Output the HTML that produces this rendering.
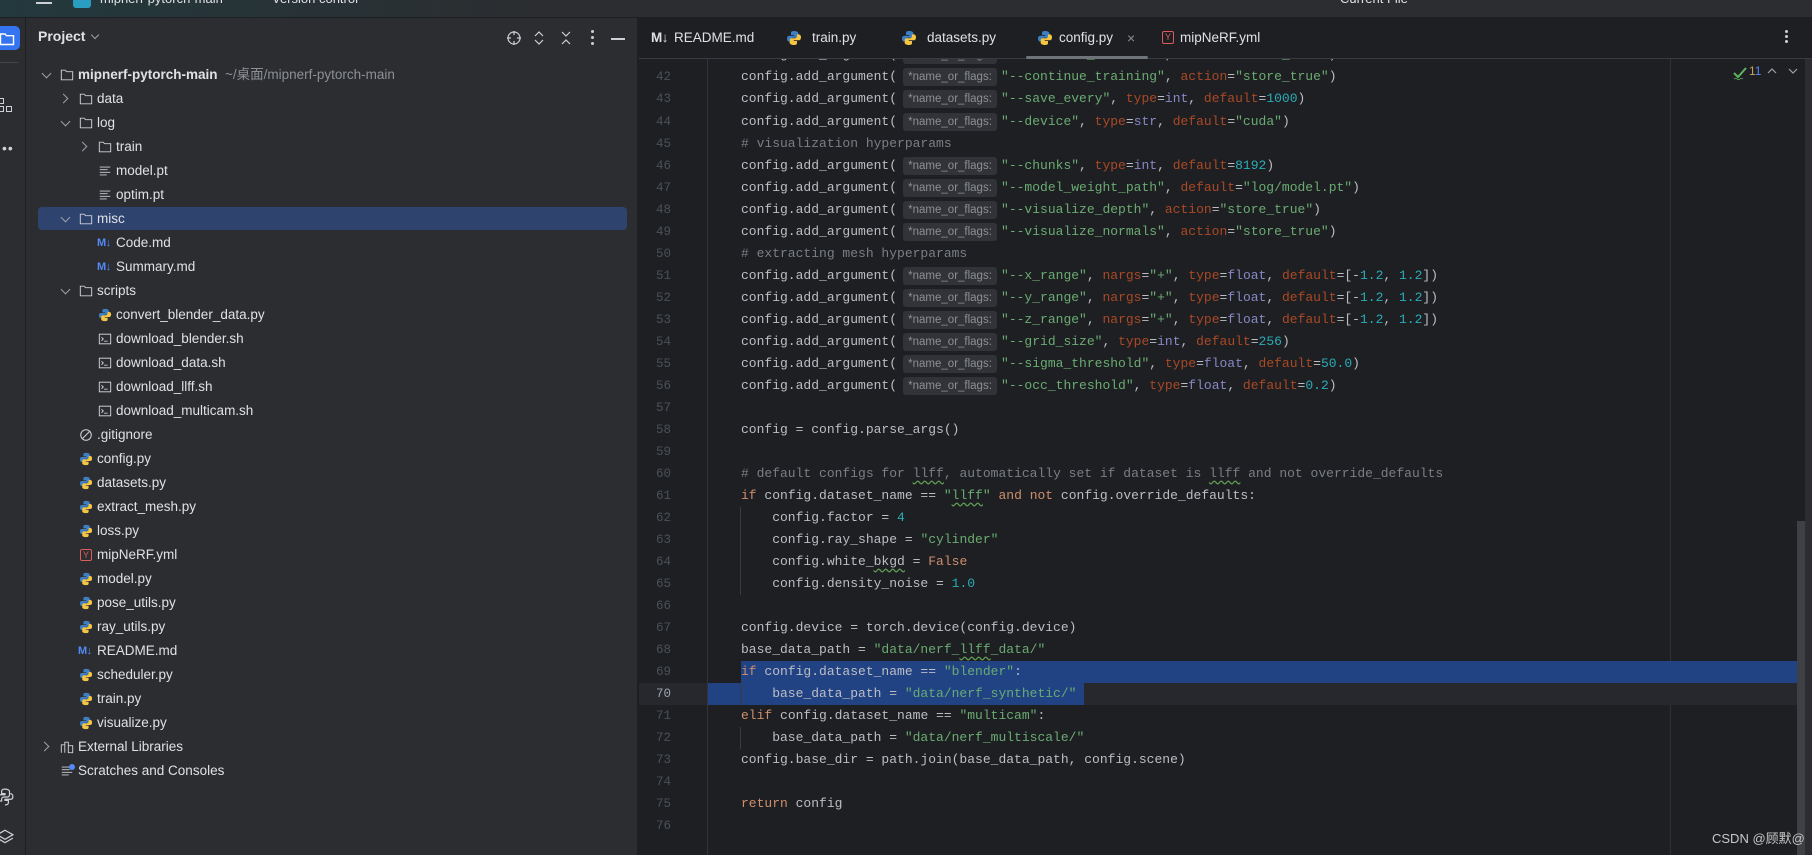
<!DOCTYPE html>
<html><head><meta charset="utf-8">
<style>
*{margin:0;padding:0;box-sizing:border-box}
body{width:1812px;height:855px;overflow:hidden;background:#1e1f22;position:relative;font-family:"Liberation Sans","Noto Sans CJK SC",sans-serif;color:#dfe1e5}
.abs{position:absolute}
#title{left:0;top:0;width:1812px;height:18px;background:linear-gradient(90deg,#23393e 0%,#2b2d30 30%,#2b2d30 100%);border-bottom:1px solid #1e1f22;overflow:hidden}
#tb{left:0;top:18px;width:26px;height:837px;background:#2b2d30;border-right:1px solid #1e1f22}
#proj{left:26px;top:18px;width:612px;height:837px;background:#2b2d30;border-right:1px solid #1e1f22}
.row{position:absolute;height:24px;line-height:24px;font-size:13.5px;white-space:nowrap}
.chev{position:absolute;width:7px;height:7px;border-right:1.3px solid #9da0a8;border-bottom:1.3px solid #9da0a8}
.chev.o{transform:rotate(45deg)}
.chev.c{transform:rotate(-45deg)}
.md{font-weight:bold;color:#548af7;font-size:11px;letter-spacing:-0.5px}
#tabs{left:639px;top:18px;width:1173px;height:41px;background:#1e1f22;border-bottom:1px solid #393b40;z-index:5}
.tab{position:absolute;top:0;height:40px;line-height:40px;font-size:13.5px;color:#dfe1e5;white-space:nowrap}
.l{position:absolute;left:0;width:1812px;height:22px;line-height:22px;font-family:"Liberation Mono",monospace;font-size:13px}
.ln{position:absolute;left:632px;width:39px;text-align:right;color:#4b5059;font-size:12.5px}
.cd{position:absolute;left:741px;white-space:pre;color:#bcbec4}
.k{color:#cf8e6d}.s{color:#6aab73}.n{color:#2aacb8}.p{color:#aa4926}.b{color:#8888c6}.c{color:#7a7e85}
.w{text-decoration:underline wavy #5f9a55;text-underline-offset:3px}
.h{display:inline-block;vertical-align:top;margin:2px 4px 0 6px;width:94px;height:18px;line-height:18px;background:#313338;border-radius:3px;color:#8c8f94;font-family:"Liberation Sans",sans-serif;font-size:11.5px;text-align:center}
</style></head><body>
<svg width="0" height="0" style="position:absolute">
<defs>
<symbol id="py" viewBox="0 0 16 16"><path d="M8 1C5 1 5 2.3 5 3v2h3.2v.7H3.3C1.9 5.7 1 6.8 1 8.6s.9 3 2.3 3H5V9.9c0-1.2 1-2.2 2.2-2.2h3.3c1 0 1.8-.8 1.8-1.8V3c0-1.1-1.7-2-4.3-2z" fill="#3d7fc4"/><path d="M8 15c3 0 3-1.3 3-2v-2H7.8v-.7h4.9c1.4 0 2.3-1.1 2.3-2.9s-.9-3-2.3-3H11v1.7c0 1.2-1 2.2-2.2 2.2H5.5c-1 0-1.8.8-1.8 1.8V13c0 1.1 1.7 2 4.3 2z" fill="#f4c542"/></symbol>
<symbol id="fd" viewBox="0 0 16 16"><path d="M1.5 2.5h4.5l1.5 1.7h7v9.3h-13z" fill="none" stroke="#ced0d6" stroke-width="1.1"/></symbol>
<symbol id="tx" viewBox="0 0 16 16"><path d="M2 3.5h12M2 6.5h9M2 9.5h12M2 12.5h8" stroke="#ced0d6" stroke-width="1.1"/></symbol>
<symbol id="sh" viewBox="0 0 16 16"><rect x="1.5" y="2.5" width="13" height="11" fill="none" stroke="#ced0d6" stroke-width="1.1"/><path d="M4 6l2 2-2 2M7 10.5h4" fill="none" stroke="#ced0d6" stroke-width="1.1"/></symbol>
</defs></svg>

<div id="title" class="abs">
<div class="abs" style="left:36px;top:2px;width:16px;height:1.5px;background:#ced0d6"></div>
<div class="abs" style="left:73px;top:-6px;width:18px;height:14px;background:#2a9ec0;border-radius:3px"></div>
<div class="abs" style="left:100px;top:-9px;font-size:13px;color:#dfe1e5">mipnerf-pytorch-main</div>
<div class="abs" style="left:272px;top:-9px;font-size:13px;color:#dfe1e5">Version control</div>
<div class="abs" style="left:1340px;top:-9px;font-size:13px;color:#dfe1e5">Current File</div>
</div>

<div id="tb" class="abs">
<div class="abs" style="left:-4px;top:8px;width:24px;height:24px;background:#3574f0;border-radius:5px"></div>
<svg class="abs" style="left:-2px;top:13px" width="18" height="16" viewBox="0 0 16 16"><path d="M1.5 3h4.5l1.5 1.7h7v8.8h-13z" fill="none" stroke="#fff" stroke-width="1.4"/></svg>
<div class="abs" style="left:0;top:44px;width:18px;height:1px;background:#43454a"></div>
<div class="abs" style="left:-2px;top:80px;width:6px;height:6px;border:1.2px solid #ced0d6"></div>
<div class="abs" style="left:-2px;top:88px;width:6px;height:6px;border:1.2px solid #ced0d6"></div>
<div class="abs" style="left:6px;top:88px;width:6px;height:6px;border:1.2px solid #ced0d6"></div>
<div class="abs" style="left:2px;top:122px;font-size:14px;color:#ced0d6;letter-spacing:1px">••</div>
<svg class="abs" style="left:-4px;top:769px" width="18" height="20" viewBox="0 0 16 16"><path d="M8 1C5 1 5 2.3 5 3v2h3v1H3C1.9 6 1 7 1 8.6s.9 3 2.3 3H5V10c0-1.2 1-2 2-2h3c1 0 2-.8 2-2V3c0-1.1-1.7-2-4-2zM8 15c3 0 3-1.3 3-2v-2H8v-1h5c1.4 0 2-1 2-2.5S14 5 12.7 5" fill="none" stroke="#ced0d6" stroke-width="1.1"/></svg>
<svg class="abs" style="left:-4px;top:810px" width="18" height="18" viewBox="0 0 16 16"><path d="M8 2l7 4-7 4-7-4zM1 9l7 4 7-4" fill="none" stroke="#ced0d6" stroke-width="1.1"/></svg>
</div>

<div id="proj" class="abs"></div>
<div class="abs" style="left:38px;top:28px;font-size:14px;font-weight:bold;color:#dfe1e5">Project</div>
<div class="abs" style="left:92px;top:32px;width:6px;height:6px;border-right:1.2px solid #9da0a8;border-bottom:1.2px solid #9da0a8;transform:rotate(45deg)"></div>
<svg class="abs" style="left:506px;top:30px" width="16" height="16" viewBox="0 0 16 16"><circle cx="8" cy="8" r="6" fill="none" stroke="#ced0d6" stroke-width="1.2"/><path d="M8 1v4M8 11v4M1 8h4M11 8h4" stroke="#ced0d6" stroke-width="1.2"/></svg>
<svg class="abs" style="left:532px;top:30px" width="14" height="16" viewBox="0 0 14 16"><path d="M3 6l4-4 4 4M3 10l4 4 4-4" fill="none" stroke="#ced0d6" stroke-width="1.2"/></svg>
<svg class="abs" style="left:559px;top:30px" width="14" height="16" viewBox="0 0 14 16"><path d="M3 2l4 4 4-4M3 14l4-4 4 4" fill="none" stroke="#ced0d6" stroke-width="1.2"/></svg>
<div class="abs" style="left:591px;top:30px;width:3px;height:3px;background:#ced0d6;border-radius:2px;box-shadow:0 6px 0 #ced0d6,0 12px 0 #ced0d6"></div>
<div class="abs" style="left:611px;top:38px;width:14px;height:1.5px;background:#ced0d6"></div>

<div class="abs" style="left:38px;top:207px;width:589px;height:23px;background:#2e436e;border-radius:4px"></div>

<div class="row" style="top:63px;left:0;width:630px">
 <div class="chev o" style="left:43px;top:7px"></div>
 <svg class="abs" style="left:60px;top:5px" width="14" height="14"><use href="#fd"/></svg>
 <span class="abs" style="left:78px;font-weight:bold">mipnerf-pytorch-main <span style="font-weight:normal;color:#8c8f94">&nbsp;~/桌面/mipnerf-pytorch-main</span></span>
</div>
<div class="row" style="top:87px;left:0"><div class="chev c" style="left:60px;top:8px"></div><svg class="abs" style="left:79px;top:5px" width="14" height="14"><use href="#fd"/></svg><span class="abs" style="left:97px">data</span></div>
<div class="row" style="top:111px;left:0"><div class="chev o" style="left:62px;top:7px"></div><svg class="abs" style="left:79px;top:5px" width="14" height="14"><use href="#fd"/></svg><span class="abs" style="left:97px">log</span></div>
<div class="row" style="top:135px;left:0"><div class="chev c" style="left:79px;top:8px"></div><svg class="abs" style="left:98px;top:5px" width="14" height="14"><use href="#fd"/></svg><span class="abs" style="left:116px">train</span></div>
<div class="row" style="top:159px;left:0"><svg class="abs" style="left:98px;top:5px" width="14" height="14"><use href="#tx"/></svg><span class="abs" style="left:116px">model.pt</span></div>
<div class="row" style="top:183px;left:0"><svg class="abs" style="left:98px;top:5px" width="14" height="14"><use href="#tx"/></svg><span class="abs" style="left:116px">optim.pt</span></div>
<div class="row" style="top:207px;left:0"><div class="chev o" style="left:62px;top:7px"></div><svg class="abs" style="left:79px;top:5px" width="14" height="14"><use href="#fd"/></svg><span class="abs" style="left:97px">misc</span></div>
<div class="row" style="top:231px;left:0"><span class="abs md" style="left:97px">M↓</span><span class="abs" style="left:116px">Code.md</span></div>
<div class="row" style="top:255px;left:0"><span class="abs md" style="left:97px">M↓</span><span class="abs" style="left:116px">Summary.md</span></div>
<div class="row" style="top:279px;left:0"><div class="chev o" style="left:62px;top:7px"></div><svg class="abs" style="left:79px;top:5px" width="14" height="14"><use href="#fd"/></svg><span class="abs" style="left:97px">scripts</span></div>
<div class="row" style="top:303px;left:0"><svg class="abs" style="left:98px;top:5px" width="14" height="14"><use href="#py"/></svg><span class="abs" style="left:116px">convert_blender_data.py</span></div>
<div class="row" style="top:327px;left:0"><svg class="abs" style="left:98px;top:5px" width="14" height="14"><use href="#sh"/></svg><span class="abs" style="left:116px">download_blender.sh</span></div>
<div class="row" style="top:351px;left:0"><svg class="abs" style="left:98px;top:5px" width="14" height="14"><use href="#sh"/></svg><span class="abs" style="left:116px">download_data.sh</span></div>
<div class="row" style="top:375px;left:0"><svg class="abs" style="left:98px;top:5px" width="14" height="14"><use href="#sh"/></svg><span class="abs" style="left:116px">download_llff.sh</span></div>
<div class="row" style="top:399px;left:0"><svg class="abs" style="left:98px;top:5px" width="14" height="14"><use href="#sh"/></svg><span class="abs" style="left:116px">download_multicam.sh</span></div>
<div class="row" style="top:423px;left:0"><svg class="abs" style="left:79px;top:5px" width="14" height="14" viewBox="0 0 16 16"><circle cx="8" cy="8" r="6" fill="none" stroke="#ced0d6" stroke-width="1.2"/><path d="M4 12L12 4" stroke="#ced0d6" stroke-width="1.2"/></svg><span class="abs" style="left:97px">.gitignore</span></div>
<div class="row" style="top:447px;left:0"><svg class="abs" style="left:79px;top:5px" width="14" height="14"><use href="#py"/></svg><span class="abs" style="left:97px">config.py</span></div>
<div class="row" style="top:471px;left:0"><svg class="abs" style="left:79px;top:5px" width="14" height="14"><use href="#py"/></svg><span class="abs" style="left:97px">datasets.py</span></div>
<div class="row" style="top:495px;left:0"><svg class="abs" style="left:79px;top:5px" width="14" height="14"><use href="#py"/></svg><span class="abs" style="left:97px">extract_mesh.py</span></div>
<div class="row" style="top:519px;left:0"><svg class="abs" style="left:79px;top:5px" width="14" height="14"><use href="#py"/></svg><span class="abs" style="left:97px">loss.py</span></div>
<div class="row" style="top:543px;left:0"><div class="abs" style="left:80px;top:6px;width:12px;height:12px;border:1px solid #db5c5c;border-radius:2px;color:#db5c5c;font-size:9px;line-height:10px;text-align:center">Y</div><span class="abs" style="left:97px">mipNeRF.yml</span></div>
<div class="row" style="top:567px;left:0"><svg class="abs" style="left:79px;top:5px" width="14" height="14"><use href="#py"/></svg><span class="abs" style="left:97px">model.py</span></div>
<div class="row" style="top:591px;left:0"><svg class="abs" style="left:79px;top:5px" width="14" height="14"><use href="#py"/></svg><span class="abs" style="left:97px">pose_utils.py</span></div>
<div class="row" style="top:615px;left:0"><svg class="abs" style="left:79px;top:5px" width="14" height="14"><use href="#py"/></svg><span class="abs" style="left:97px">ray_utils.py</span></div>
<div class="row" style="top:639px;left:0"><span class="abs md" style="left:78px">M↓</span><span class="abs" style="left:97px">README.md</span></div>
<div class="row" style="top:663px;left:0"><svg class="abs" style="left:79px;top:5px" width="14" height="14"><use href="#py"/></svg><span class="abs" style="left:97px">scheduler.py</span></div>
<div class="row" style="top:687px;left:0"><svg class="abs" style="left:79px;top:5px" width="14" height="14"><use href="#py"/></svg><span class="abs" style="left:97px">train.py</span></div>
<div class="row" style="top:711px;left:0"><svg class="abs" style="left:79px;top:5px" width="14" height="14"><use href="#py"/></svg><span class="abs" style="left:97px">visualize.py</span></div>
<div class="row" style="top:735px;left:0"><div class="chev c" style="left:41px;top:8px"></div><svg class="abs" style="left:60px;top:5px" width="14" height="14" viewBox="0 0 16 16"><path d="M1.5 14.5v-9h4v9M5.5 14.5v-12h4v12M9.5 14.5v-8h5v8z" fill="none" stroke="#ced0d6" stroke-width="1.1"/></svg><span class="abs" style="left:78px">External Libraries</span></div>
<div class="row" style="top:759px;left:0"><svg class="abs" style="left:60px;top:5px" width="14" height="14"><use href="#tx"/></svg><div class="abs" style="left:69px;top:5px;width:6px;height:6px;border-radius:3px;background:#548af7"></div><span class="abs" style="left:78px">Scratches and Consoles</span></div>

<div id="tabs" class="abs">
 <span class="tab md" style="left:12px">M↓</span><span class="tab" style="left:35px">README.md</span>
 <svg class="abs" style="left:147px;top:12px" width="16" height="16"><use href="#py"/></svg><span class="tab" style="left:173px">train.py</span>
 <svg class="abs" style="left:262px;top:12px" width="16" height="16"><use href="#py"/></svg><span class="tab" style="left:288px">datasets.py</span>
 <svg class="abs" style="left:398px;top:12px" width="16" height="16"><use href="#py"/></svg><span class="tab" style="left:420px">config.py</span>
 <span class="tab" style="left:488px;color:#8c8f94;font-size:14px">×</span>
 <div class="abs" style="left:387px;top:38px;width:122px;height:3px;background:#6f737a;border-radius:2px"></div>
 <div class="abs" style="left:523px;top:13px;width:12px;height:13px;border:1px solid #db5c5c;border-radius:2px;color:#db5c5c;font-size:9px;line-height:11px;text-align:center">Y</div>
 <span class="tab" style="left:541px">mipNeRF.yml</span>
 <div class="abs" style="left:1146px;top:12px;width:3px;height:3px;background:#ced0d6;border-radius:2px;box-shadow:0 5px 0 #ced0d6,0 10px 0 #ced0d6"></div>
</div>

<div class="abs" style="left:707px;top:59px;width:1px;height:796px;background:#313438"></div>
<div class="abs" style="left:1670px;top:59px;width:1px;height:796px;background:#2e3034"></div>
<div class="abs" style="left:1805px;top:59px;width:7px;height:796px;background:#2b2d30"></div>
<div class="abs" style="left:1797px;top:521px;width:8px;height:334px;background:#3e4045"></div>
<div class="abs" style="left:639px;top:683px;width:68px;height:22px;background:#26282e"></div>
<div class="abs" style="left:1084px;top:683px;width:713px;height:22px;background:#26282e"></div>
<div class="abs" style="left:741px;top:661px;width:1056px;height:22px;background:#214283"></div>
<div class="abs" style="left:708px;top:683px;width:376px;height:22px;background:#214283"></div>
<div class="abs" style="left:740px;top:507px;width:1px;height:88px;background:#393b40"></div>
<div class="abs" style="left:740px;top:683px;width:1px;height:22px;background:#393b40"></div>
<div class="abs" style="left:740px;top:727px;width:1px;height:22px;background:#393b40"></div>

<svg class="abs" style="left:1733px;top:66px" width="14" height="14" viewBox="0 0 14 14"><path d="M1 7l4 4 8-9" fill="none" stroke="#5fb35f" stroke-width="2"/><path d="M1 13q1.5-1.5 3 0t3 0 3 0" fill="none" stroke="#5fb35f" stroke-width="0.8"/></svg>
<div class="abs" style="left:1749px;top:64px;font-size:12px;color:#c9a35c">1<span style="color:#548af7">1</span></div>
<svg class="abs" style="left:1767px;top:67px" width="10" height="8"><path d="M1 6l4-4 4 4" fill="none" stroke="#9da0a8" stroke-width="1.2"/></svg>
<svg class="abs" style="left:1788px;top:67px" width="10" height="8"><path d="M1 2l4 4 4-4" fill="none" stroke="#9da0a8" stroke-width="1.2"/></svg>

<div class="l" style="top:44.4px"><span class="ln">41</span><span class="cd">config.add_argument(<span class="h">*name_or_flags:</span><span class="s">"--override_defaults"</span>, <span class="p">action</span>=<span class="s">"store_true"</span>)</span></div>
<div class="l" style="top:66.4px"><span class="ln">42</span><span class="cd">config.add_argument(<span class="h">*name_or_flags:</span><span class="s">"--continue_training"</span>, <span class="p">action</span>=<span class="s">"store_true"</span>)</span></div>
<div class="l" style="top:88.4px"><span class="ln">43</span><span class="cd">config.add_argument(<span class="h">*name_or_flags:</span><span class="s">"--save_every"</span>, <span class="p">type</span>=<span class="b">int</span>, <span class="p">default</span>=<span class="n">1000</span>)</span></div>
<div class="l" style="top:110.5px"><span class="ln">44</span><span class="cd">config.add_argument(<span class="h">*name_or_flags:</span><span class="s">"--device"</span>, <span class="p">type</span>=<span class="b">str</span>, <span class="p">default</span>=<span class="s">"cuda"</span>)</span></div>
<div class="l" style="top:132.5px"><span class="ln">45</span><span class="cd c"># visualization hyperparams</span></div>
<div class="l" style="top:154.5px"><span class="ln">46</span><span class="cd">config.add_argument(<span class="h">*name_or_flags:</span><span class="s">"--chunks"</span>, <span class="p">type</span>=<span class="b">int</span>, <span class="p">default</span>=<span class="n">8192</span>)</span></div>
<div class="l" style="top:176.5px"><span class="ln">47</span><span class="cd">config.add_argument(<span class="h">*name_or_flags:</span><span class="s">"--model_weight_path"</span>, <span class="p">default</span>=<span class="s">"log/model.pt"</span>)</span></div>
<div class="l" style="top:198.5px"><span class="ln">48</span><span class="cd">config.add_argument(<span class="h">*name_or_flags:</span><span class="s">"--visualize_depth"</span>, <span class="p">action</span>=<span class="s">"store_true"</span>)</span></div>
<div class="l" style="top:220.6px"><span class="ln">49</span><span class="cd">config.add_argument(<span class="h">*name_or_flags:</span><span class="s">"--visualize_normals"</span>, <span class="p">action</span>=<span class="s">"store_true"</span>)</span></div>
<div class="l" style="top:242.6px"><span class="ln">50</span><span class="cd c"># extracting mesh hyperparams</span></div>
<div class="l" style="top:264.6px"><span class="ln">51</span><span class="cd">config.add_argument(<span class="h">*name_or_flags:</span><span class="s">"--x_range"</span>, <span class="p">nargs</span>=<span class="s">"+"</span>, <span class="p">type</span>=<span class="b">float</span>, <span class="p">default</span>=[-<span class="n">1.2</span>, <span class="n">1.2</span>])</span></div>
<div class="l" style="top:286.6px"><span class="ln">52</span><span class="cd">config.add_argument(<span class="h">*name_or_flags:</span><span class="s">"--y_range"</span>, <span class="p">nargs</span>=<span class="s">"+"</span>, <span class="p">type</span>=<span class="b">float</span>, <span class="p">default</span>=[-<span class="n">1.2</span>, <span class="n">1.2</span>])</span></div>
<div class="l" style="top:308.6px"><span class="ln">53</span><span class="cd">config.add_argument(<span class="h">*name_or_flags:</span><span class="s">"--z_range"</span>, <span class="p">nargs</span>=<span class="s">"+"</span>, <span class="p">type</span>=<span class="b">float</span>, <span class="p">default</span>=[-<span class="n">1.2</span>, <span class="n">1.2</span>])</span></div>
<div class="l" style="top:330.7px"><span class="ln">54</span><span class="cd">config.add_argument(<span class="h">*name_or_flags:</span><span class="s">"--grid_size"</span>, <span class="p">type</span>=<span class="b">int</span>, <span class="p">default</span>=<span class="n">256</span>)</span></div>
<div class="l" style="top:352.7px"><span class="ln">55</span><span class="cd">config.add_argument(<span class="h">*name_or_flags:</span><span class="s">"--sigma_threshold"</span>, <span class="p">type</span>=<span class="b">float</span>, <span class="p">default</span>=<span class="n">50.0</span>)</span></div>
<div class="l" style="top:374.7px"><span class="ln">56</span><span class="cd">config.add_argument(<span class="h">*name_or_flags:</span><span class="s">"--occ_threshold"</span>, <span class="p">type</span>=<span class="b">float</span>, <span class="p">default</span>=<span class="n">0.2</span>)</span></div>
<div class="l" style="top:396.7px"><span class="ln">57</span></div>
<div class="l" style="top:418.7px"><span class="ln">58</span><span class="cd">config = config.parse_args()</span></div>
<div class="l" style="top:440.8px"><span class="ln">59</span></div>
<div class="l" style="top:462.8px"><span class="ln">60</span><span class="cd c"># default configs for <span class="w">llff</span>, automatically set if dataset is <span class="w">llff</span> and not override_defaults</span></div>
<div class="l" style="top:484.8px"><span class="ln">61</span><span class="cd"><span class="k">if</span> config.dataset_name == <span class="s">"<span class="w">llff</span>"</span> <span class="k">and not</span> config.override_defaults:</span></div>
<div class="l" style="top:506.8px"><span class="ln">62</span><span class="cd">    config.factor = <span class="n">4</span></span></div>
<div class="l" style="top:528.8px"><span class="ln">63</span><span class="cd">    config.ray_shape = <span class="s">"cylinder"</span></span></div>
<div class="l" style="top:550.8px"><span class="ln">64</span><span class="cd">    config.white_<span class="w">bkgd</span> = <span class="k">False</span></span></div>
<div class="l" style="top:572.9px"><span class="ln">65</span><span class="cd">    config.density_noise = <span class="n">1.0</span></span></div>
<div class="l" style="top:594.9px"><span class="ln">66</span></div>
<div class="l" style="top:616.9px"><span class="ln">67</span><span class="cd">config.device = torch.device(config.device)</span></div>
<div class="l" style="top:638.9px"><span class="ln">68</span><span class="cd">base_data_path = <span class="s">"data/nerf_<span class="w">llff</span>_data/"</span></span></div>
<div class="l" style="top:660.9px"><span class="ln">69</span><span class="cd"><span class="k">if</span> config.dataset_name == <span class="s">"blender"</span>:</span></div>
<div class="l" style="top:683px"><span class="ln" style="color:#a1a3ab">70</span><span class="cd">    base_data_path = <span class="s">"data/nerf_synthetic/"</span></span></div>
<div class="l" style="top:705px"><span class="ln">71</span><span class="cd"><span class="k">elif</span> config.dataset_name == <span class="s">"multicam"</span>:</span></div>
<div class="l" style="top:727px"><span class="ln">72</span><span class="cd">    base_data_path = <span class="s">"data/nerf_multiscale/"</span></span></div>
<div class="l" style="top:749px"><span class="ln">73</span><span class="cd">config.base_dir = path.join(base_data_path, config.scene)</span></div>
<div class="l" style="top:771px"><span class="ln">74</span></div>
<div class="l" style="top:793.1px"><span class="ln">75</span><span class="cd"><span class="k">return</span> config</span></div>
<div class="l" style="top:815.1px"><span class="ln">76</span></div>

<div class="abs" style="left:1712px;top:828px;font-size:13px;color:#c8c8c8">CSDN @顾默@</div>
</body></html>
